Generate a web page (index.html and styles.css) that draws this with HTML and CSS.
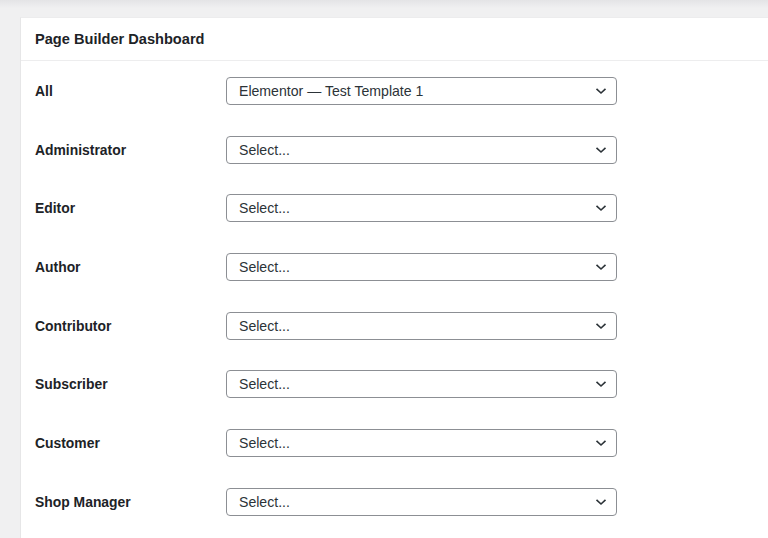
FILE: index.html
```html
<!DOCTYPE html>
<html>
<head>
<meta charset="utf-8">
<link rel="stylesheet" href="styles.css">
</head>
<body>
<div class="topshade"></div>
<div class="card">
  <div class="card-header">Page Builder Dashboard</div>
  <div class="rows">
    <div class="row"><div class="label">All</div><div class="select"><span>Elementor — Test Template 1</span><svg class="chev" viewBox="0 0 12 8" width="12" height="8"><path d="M1.5 1.8 L6 6 L10.5 1.8" fill="none" stroke="#2c3338" stroke-width="1.6"/></svg></div></div>
    <div class="row"><div class="label">Administrator</div><div class="select"><span>Select...</span><svg class="chev" viewBox="0 0 12 8" width="12" height="8"><path d="M1.5 1.8 L6 6 L10.5 1.8" fill="none" stroke="#2c3338" stroke-width="1.6"/></svg></div></div>
    <div class="row"><div class="label">Editor</div><div class="select"><span>Select...</span><svg class="chev" viewBox="0 0 12 8" width="12" height="8"><path d="M1.5 1.8 L6 6 L10.5 1.8" fill="none" stroke="#2c3338" stroke-width="1.6"/></svg></div></div>
    <div class="row"><div class="label">Author</div><div class="select"><span>Select...</span><svg class="chev" viewBox="0 0 12 8" width="12" height="8"><path d="M1.5 1.8 L6 6 L10.5 1.8" fill="none" stroke="#2c3338" stroke-width="1.6"/></svg></div></div>
    <div class="row"><div class="label">Contributor</div><div class="select"><span>Select...</span><svg class="chev" viewBox="0 0 12 8" width="12" height="8"><path d="M1.5 1.8 L6 6 L10.5 1.8" fill="none" stroke="#2c3338" stroke-width="1.6"/></svg></div></div>
    <div class="row"><div class="label">Subscriber</div><div class="select"><span>Select...</span><svg class="chev" viewBox="0 0 12 8" width="12" height="8"><path d="M1.5 1.8 L6 6 L10.5 1.8" fill="none" stroke="#2c3338" stroke-width="1.6"/></svg></div></div>
    <div class="row"><div class="label">Customer</div><div class="select"><span>Select...</span><svg class="chev" viewBox="0 0 12 8" width="12" height="8"><path d="M1.5 1.8 L6 6 L10.5 1.8" fill="none" stroke="#2c3338" stroke-width="1.6"/></svg></div></div>
    <div class="row"><div class="label">Shop Manager</div><div class="select"><span>Select...</span><svg class="chev" viewBox="0 0 12 8" width="12" height="8"><path d="M1.5 1.8 L6 6 L10.5 1.8" fill="none" stroke="#2c3338" stroke-width="1.6"/></svg></div></div>
  </div>
</div>
</body>
</html>
```
FILE: styles.css
```css
html, body {
  margin: 0;
  padding: 0;
  height: 100%;
  overflow: hidden;
}
body {
  background: #f0f0f1;
  font-family: "Liberation Sans", Arial, sans-serif;
  color: #1d2327;
}
.topshade {
  height: 8px;
  background: linear-gradient(#e4e4e6, #f0f0f1);
}
.card {
  margin-top: 9px;
  margin-left: 20px;
  background: #fff;
  border-left: 1px solid #e6e6e7;
  border-top: 1px solid #ececed;
  min-height: 600px;
}
.card-header {
  height: 43px;
  box-sizing: border-box;
  padding: 13px 0 0 14px;
  font-size: 14.6px;
  font-weight: bold;
  border-bottom: 1px solid #ededee;
}
.rows {
  display: flex;
  flex-direction: column;
  gap: 30.67px;
  padding-top: 16px;
}
.row {
  display: flex;
  align-items: center;
  height: 28px;
}
.label {
  width: 205px;
  padding-left: 14px;
  box-sizing: border-box;
  font-size: 13.9px;
  font-weight: bold;
}
.select {
  width: 391px;
  height: 28px;
  box-sizing: border-box;
  border: 1px solid #8c8f94;
  border-radius: 4px;
  display: flex;
  align-items: center;
  justify-content: space-between;
  padding: 0 9px 0 12px;
  font-size: 14.1px;
  color: #2c3338;
}
.chev {
  display: block;
}
```
